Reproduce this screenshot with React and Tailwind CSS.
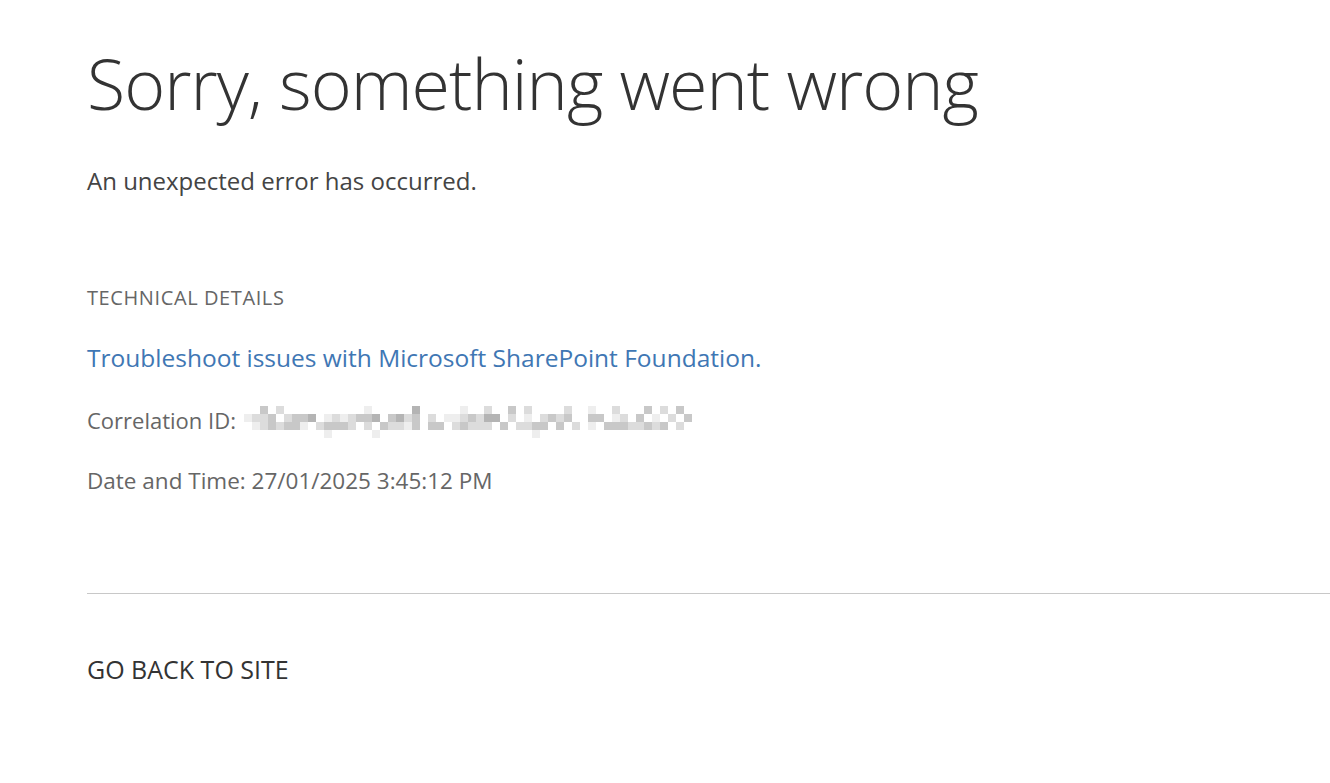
import React from 'react';

// pixelated (blurred) correlation id
const rows = [
  '..3.2..........1.....4.....1..2..3.2....2..1..2...3.2.3..3.3..1...........',
  '1223.2334.1212334.3423.2.1123244.2.1.2323..33.12.3.1.2.3....',
  '.1232331.23332.2.32213.33.23222.3.2233.3.2.1.33322323.2.3',
  '..........1.....1...................1.....................',
];

const shades = {
  '1': 'bg-[#eeeeee]',
  '2': 'bg-[#dcdcdc]',
  '3': 'bg-[#c8c8c8]',
  '4': 'bg-[#b4b4b4]',
  '.': 'bg-white',
};

function Pixelated() {
  return (
    <span className="inline-flex flex-col ml-[8px] mt-[1px]">
      {rows.map((r, i) => (
        <span key={i} className="flex">
          {r.slice(0, 56).split('').map((c, j) => (
            <span key={j} className={`w-[8px] h-[8px] ${shades[c]}`} />
          ))}
        </span>
      ))}
    </span>
  );
}

export default function App() {
  return (
    <div className="min-h-screen bg-white pl-[87px] pt-[37px]" style={{ fontFamily: "'Open Sans', 'Noto Sans', sans-serif" }}>
      <h1 className="text-[70px] leading-[92px] font-light text-[#333333] tracking-[-1px] whitespace-nowrap">
        Sorry, something went wrong
      </h1>

      <p className="mt-[36px] text-[24px] leading-[32px] text-[#444444]">
        An unexpected error has occurred.
      </p>

      <div className="mt-[87px]">
        <div className="text-[20px] leading-[28px] text-[#666666] uppercase tracking-[0.6px]">Technical Details</div>
        <a href="#" className="block mt-[30px] text-[24.5px] leading-[32px] text-[#3f77b4]">
          Troubleshoot issues with Microsoft SharePoint Foundation.
        </a>
        <div className="mt-[31px] h-[30px] text-[22px] leading-[30px] text-[#666666] flex items-start">
          <span>Correlation ID:</span>
          <Pixelated />
        </div>
        <div className="mt-[31px] text-[22.5px] leading-[30px] text-[#666666]">
          Date and Time: 27/01/2025 3:45:12 PM
        </div>
      </div>

      <div className="mt-[97px] border-t border-[#c8c8c8]" />

      <a href="#" className="block mt-[59px] text-[25px] leading-[32px] text-[#333333] uppercase">
        Go back to site
      </a>
    </div>
  );
}
